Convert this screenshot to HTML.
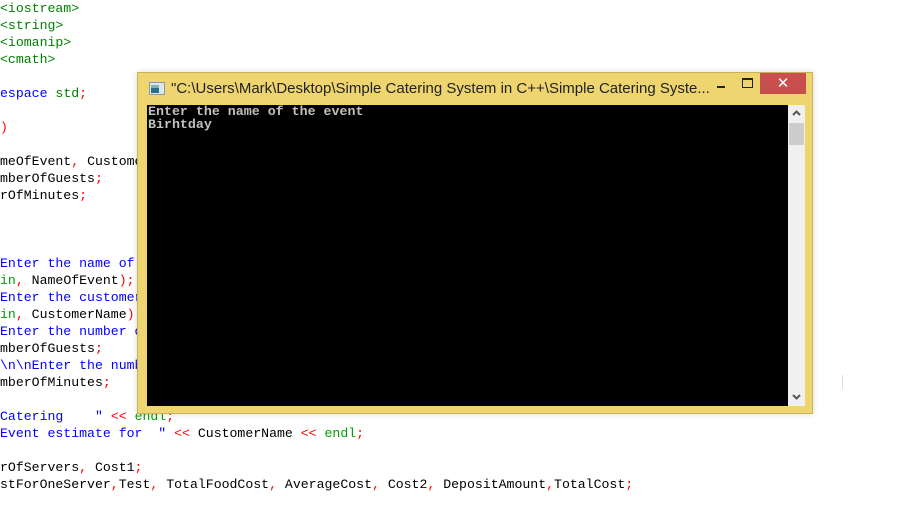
<!DOCTYPE html>
<html><head><meta charset="utf-8"><style>
body{margin:0;width:919px;height:507px;background:#fff;position:relative;overflow:hidden;font-family:"Liberation Mono",monospace}
.code{position:absolute;left:0;top:0;font-size:13.2px;line-height:17px;white-space:pre;color:#000}
.g{color:#008000}.b{color:#0000ff}.r{color:#ff0000}.gr{color:#00a000}
.win{position:absolute;left:137px;top:72px;width:676px;height:342px;background:#eed56f;border:1px solid #c9b35a;box-sizing:border-box;box-shadow:0 0 6px rgba(0,0,0,.15)}
.title{position:absolute;left:33px;top:7px;width:540px;overflow:hidden;white-space:nowrap;font-family:"Liberation Sans",sans-serif;font-size:15px;color:#222}
.con{position:absolute;left:9px;top:32px;width:641px;height:301px;background:#000;color:#c0c0c0;font-size:13.3px;line-height:13px;white-space:pre;padding:0 0 0 1px;box-sizing:border-box;font-weight:bold}
.sb{position:absolute;left:650px;top:32px;width:17px;height:301px;background:#f0f0f0}
.thumb{position:absolute;left:1px;top:18px;width:15px;height:22px;background:#cdcdcd}
.close{position:absolute;left:622px;top:0px;width:46px;height:21px;background:#c7504f;color:#fff;font-family:"Liberation Sans",sans-serif;font-size:15px;text-align:center;line-height:21px}
</style></head><body>
<div class="code"><span class="g">&lt;iostream&gt;</span>
<span class="g">&lt;string&gt;</span>
<span class="g">&lt;iomanip&gt;</span>
<span class="g">&lt;cmath&gt;</span>

<span class="b">espace</span> <span class="g">std</span><span class="r">;</span>

<span class="r">)</span>

meOfEvent<span class="r">,</span> CustomerName
mberOfGuests<span class="r">;</span>
rOfMinutes<span class="r">;</span>



<span class="b">Enter the name of</span>
<span class="gr">in</span><span class="r">,</span> NameOfEvent<span class="r">);</span>
<span class="b">Enter the customer</span>
<span class="gr">in</span><span class="r">,</span> CustomerName<span class="r">);</span>
<span class="b">Enter the number of</span>
mberOfGuests<span class="r">;</span>
<span class="b">\n\nEnter the number</span>
mberOfMinutes<span class="r">;</span>

<span class="b">Catering    "</span> <span class="r">&lt;&lt;</span> <span class="gr">endl</span><span class="r">;</span>
<span class="b">Event estimate for  "</span> <span class="r">&lt;&lt;</span> CustomerName <span class="r">&lt;&lt;</span> <span class="gr">endl</span><span class="r">;</span>

rOfServers<span class="r">,</span> Cost1<span class="r">;</span>
stForOneServer<span class="r">,</span>Test<span class="r">,</span> TotalFoodCost<span class="r">,</span> AverageCost<span class="r">,</span> Cost2<span class="r">,</span> DepositAmount<span class="r">,</span>TotalCost<span class="r">;</span></div>
<div class="win">
<svg style="position:absolute;left:11px;top:9px" width="16" height="13"><rect x="0.5" y="0.5" width="15" height="12" fill="#dfe6ea" stroke="#8a9aa6"/><rect x="2" y="3" width="8" height="8" fill="#2a6e8c"/><rect x="2" y="3" width="8" height="3" fill="#7fb0c8"/></svg>
<div class="title">"C:\Users\Mark\Desktop\Simple Catering System in C++\Simple Catering Syste...</div>
<div style="position:absolute;left:579px;top:13px;width:8px;height:2px;background:#222"></div>
<div style="position:absolute;left:604px;top:5px;width:9px;height:7px;border:1px solid #222;border-top-width:2px"></div>
<div class="close">✕</div>
<div class="con">Enter the name of the event
Birhtday</div>
<div class="sb"><div class="thumb"></div>
<svg style="position:absolute;left:4px;top:5px" width="9" height="6"><path d="M1 5L4.5 1.5L8 5" stroke="#555" stroke-width="2" fill="none"/></svg>
<svg style="position:absolute;left:4px;top:289px" width="9" height="6"><path d="M1 1L4.5 4.5L8 1" stroke="#555" stroke-width="2" fill="none"/></svg>
</div>
</div>
<div style="position:absolute;left:842px;top:375px;width:1px;height:14px;background:#ddd"></div>
</body></html>
